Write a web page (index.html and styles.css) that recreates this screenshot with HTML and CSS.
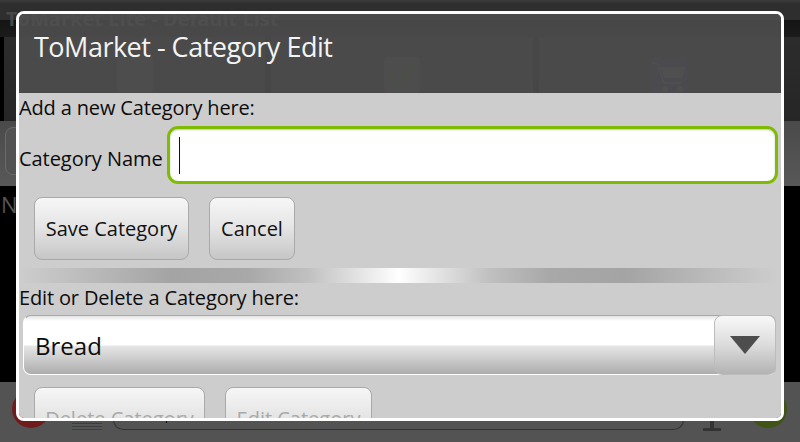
FILE: index.html
```html
<!DOCTYPE html>
<html lang="en">
<head>
<meta charset="utf-8">
<title>ToMarket - Category Edit</title>
<link rel="stylesheet" href="styles.css">
</head>
<body>
<div class="app">
  <div class="app-title"><span class="app-title-text">ToMarket Lite - Default List</span></div>
  <div class="toolbar">
    <div class="tool"><span class="tool-icon"></span></div>
    <div class="tool"><span class="tool-icon tool-check">
      <svg viewBox="0 0 36 36" width="36" height="36"><path d="M5 18l9 10L31 7" fill="none" stroke="#3a4d20" stroke-width="6"/></svg>
    </span></div>
    <div class="tool"><span class="tool-icon tool-cart">
      <svg viewBox="0 0 36 36" width="36" height="36"><path d="M1 6l6 1 6 19h17" fill="none" stroke="#4c4c4c" stroke-width="2"/><path d="M10 10h25l-4 11H13z" fill="#4c4c4c"/><circle cx="14" cy="32" r="3" fill="#4c4c4c"/><circle cx="29" cy="32" r="3" fill="#4c4c4c"/></svg>
    </span></div>
  </div>
  <div class="entry-row"><span class="entry-btn"></span></div>
  <div class="list"><span class="list-letter">N</span></div>
  <div class="bottom">
    <span class="dot dot-red"></span>
    <span class="menu-lines"></span>
    <span class="bottom-input"><span class="bottom-caret"></span></span>
    <span class="stand"></span>
    <span class="dot dot-green"></span>
  </div>
</div>

<div class="dialog">
  <div class="dialog-title">ToMarket - Category Edit</div>
  <div class="dialog-body">
    <div class="label">Add a new Category here:</div>
    <div class="name-row">
      <span class="name-label">Category Name</span>
      <div class="name-input"><span class="caret"></span></div>
    </div>
    <div class="btn-row">
      <button class="btn btn-save">Save Category</button>
      <button class="btn btn-cancel">Cancel</button>
    </div>
    <div class="divider"></div>
    <div class="label">Edit or Delete a Category here:</div>
    <div class="spinner">
      <span class="spinner-text">Bread</span>
      <span class="spinner-btn"><span class="arrow"></span></span>
    </div>
    <div class="btn-row btn-row-last">
      <button class="btn btn-delete" disabled>Delete Category</button>
      <button class="btn btn-edit" disabled>Edit Category</button>
    </div>
  </div>
</div>
</body>
</html>
```
FILE: styles.css
```css
* { box-sizing: border-box; }
html, body { margin: 0; height: 442px; overflow: hidden; background: #000; }
body { font-family: "Open Sans", "Noto Sans", sans-serif; position: relative; }

.app { height: 442px; display: flex; flex-direction: column; }
.app-title {
  height: 37px; padding: 6px 6px 0;
  background: linear-gradient(#3c3c3c 0, #2e2e2e 4px, #2e2e2e 20px, #141414 20px, #1c1c1c 37px);
}
.app-title-text { font-size: 20px; font-weight: 700; color: #484848; line-height: 26px; }
.toolbar {
  height: 84px; display: flex; gap: 6px;
  background: linear-gradient(#141414, #0c0c0c);
  border-left: 4px solid #000;
}
.tool {
  flex: 1; display: flex; justify-content: center; align-items: flex-end; padding-bottom: 28px;
  background: linear-gradient(#2c2c2c, #262626);
}
.tool-icon { width: 36px; height: 36px; border-radius: 4px; background: #404040; display: block; }
.tool-cart { background: #26264e; }
.entry-row { height: 65px; padding: 6px 5px; background: linear-gradient(#4a4a4a, #585858); }
.entry-btn { display: block; width: 60px; height: 48px; border: 1px solid #6a6a6a; border-radius: 8px; background: #525252; }
.list { flex: 1; background: #000; padding: 4px 1px; }
.list-letter { font-size: 22px; line-height: 28px; color: #555; }
.bottom { height: 60px; background: #535353; display: flex; align-items: flex-start; padding-left: 12px; }
.dot { width: 38px; height: 38px; border-radius: 50%; flex: none; margin-top: 8px; }
.dot-red { background: #701c1c; }
.dot-green { background: #3f5416; margin-left: 28px; }
.menu-lines {
  width: 30px; height: 8px; margin: 41px 0 0 22px; flex: none;
  background: repeating-linear-gradient(#3c3c3c 0 1px, #555 1px 3px);
}
.bottom-input {
  width: 571px; height: 48px; margin: 0 0 0 11px; flex: none; position: relative;
  border: 1px solid #333; border-top: 0; border-radius: 0 0 10px 10px;
}
.bottom-caret { position: absolute; left: 52px; top: 38px; width: 1px; height: 3px; background: #000; }
.stand {
  width: 18px; height: 10px; margin: 39px 0 0 19px; flex: none;
  background: linear-gradient(#333, #333) center top / 4px 7px no-repeat, linear-gradient(#333, #333) center bottom / 18px 3px no-repeat;
}

.dialog {
  position: absolute; left: 16px; top: 11px; width: 768px; height: 410px;
  border: 3px solid #fff; border-radius: 8px; overflow: hidden;
  display: flex; flex-direction: column;
}
.dialog-title {
  height: 79px; flex: none; padding: 14px 0 0 15px;
  font-size: 27px; letter-spacing: -0.5px; line-height: 38px; color: #f4f4f4;
  background: rgba(79, 79, 79, 0.87);
}
.dialog-body { flex: 1; min-height: 0; background: #cdcdcd; color: #0c0c0c; overflow: hidden; }
.label { height: 30px; line-height: 30px; font-size: 20px; letter-spacing: -0.15px; }
.name-row { display: flex; align-items: center; gap: 4px; margin: 3px 3px 0 0; height: 58px; }
.name-label { font-size: 20px; letter-spacing: -0.05px; flex: none; padding-top: 6px; }
.name-input {
  flex: 1; height: 58px; background: #fff; border: 3px solid #7fbb00; border-radius: 11px;
  padding: 8px 9px; box-shadow: inset 0 1px 2px #c4c4c4;
}
.caret { display: block; width: 1px; height: 37px; background: #111; }
.btn-row { display: flex; gap: 20px; padding-left: 15px; margin-top: 13px; }
.btn {
  height: 63px; flex: none; font: inherit; font-size: 20px; color: #111; padding: 0;
  border: 1px solid #a9a9a9; border-radius: 8px;
  background: linear-gradient(#f6f6f6, #e6e6e6 45%, #c6c6c6);
}
.btn-save { width: 155px; }
.btn-cancel { width: 86px; }
.divider {
  height: 15px; margin: 8px 4px 0 1px;
  background: linear-gradient(90deg, #cdcdcd, #a4a4a4 20%, #a8a8a8 30%, #c0c0c0 38%, #ffffff 50%, #c0c0c0 62%, #a8a8a8 70%, #a4a4a4 80%, #cdcdcd);
}
.spinner {
  height: 60px; margin: 2px 5px 0 4px; display: flex; align-items: center; justify-content: space-between;
  border: 1px solid #a8a8a8; border-bottom-color: #fff; border-left-color: #fff; border-radius: 8px;
  background: linear-gradient(#e4e4e4, #fff 5px, #fff 29px, #e6e6e6 30px, #adadad);
}
.spinner-text { font-size: 24px; color: #0c0c0c; padding-left: 11px; }
.spinner-btn {
  width: 62px; height: 60px; margin: -1px; flex: none; display: flex; justify-content: center; align-items: center;
  border: 1px solid #bcbcbc; border-radius: 8px;
  background: linear-gradient(#f8f8f8, #dcdcdc 50%, #b3b3b3);
}
.arrow { width: 0; height: 0; border-style: solid; border-width: 18px 15px 0; border-color: #4d4d4d transparent transparent; }
.btn-row-last { margin-top: 12px; }
.btn-delete { width: 171px; color: #a9a9a9; }
.btn-edit { width: 147px; color: #a9a9a9; }
```
